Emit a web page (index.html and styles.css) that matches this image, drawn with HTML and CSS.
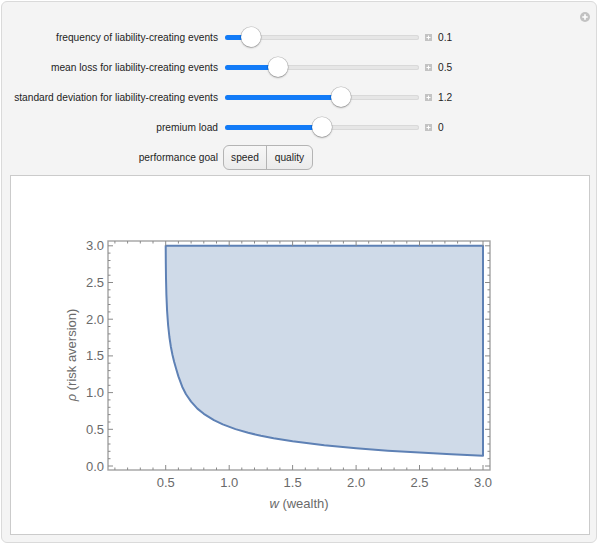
FILE: index.html
```html
<!DOCTYPE html>
<html>
<head>
<meta charset="utf-8">
<link rel="stylesheet" href="styles.css">
</head>
<body>
<div class="panel">
  <svg class="corner" width="10" height="10" viewBox="0 0 10 10"><circle cx="5" cy="5" r="5" fill="#c2c2c2"/><path d="M5 2.3v5.4M2.3 5h5.4" stroke="#fff" stroke-width="1.6"/></svg>
  <div class="controls">
    <div class="row">
      <div class="label">frequency of liability-creating events</div>
      <div class="slider"><div class="fill" style="width:26px"></div><div class="thumb" style="left:16px"></div></div>
      <svg class="plus" width="7" height="7" viewBox="0 0 7 7"><rect width="7" height="7" fill="#c3c3c3"/><path d="M3.5 1.5v4M1.5 3.5h4" stroke="#fff" stroke-width="1"/></svg>
      <span class="value">0.1</span>
    </div>
    <div class="row">
      <div class="label">mean loss for liability-creating events</div>
      <div class="slider"><div class="fill" style="width:53px"></div><div class="thumb" style="left:43px"></div></div>
      <svg class="plus" width="7" height="7" viewBox="0 0 7 7"><rect width="7" height="7" fill="#c3c3c3"/><path d="M3.5 1.5v4M1.5 3.5h4" stroke="#fff" stroke-width="1"/></svg>
      <span class="value">0.5</span>
    </div>
    <div class="row">
      <div class="label">standard deviation for liability-creating events</div>
      <div class="slider"><div class="fill" style="width:116px"></div><div class="thumb" style="left:106px"></div></div>
      <svg class="plus" width="7" height="7" viewBox="0 0 7 7"><rect width="7" height="7" fill="#c3c3c3"/><path d="M3.5 1.5v4M1.5 3.5h4" stroke="#fff" stroke-width="1"/></svg>
      <span class="value">1.2</span>
    </div>
    <div class="row">
      <div class="label">premium load</div>
      <div class="slider"><div class="fill" style="width:97px"></div><div class="thumb" style="left:87px"></div></div>
      <svg class="plus" width="7" height="7" viewBox="0 0 7 7"><rect width="7" height="7" fill="#c3c3c3"/><path d="M3.5 1.5v4M1.5 3.5h4" stroke="#fff" stroke-width="1"/></svg>
      <span class="value">0</span>
    </div>
    <div class="row">
      <div class="label label-btn">performance goal</div>
      <div class="seg">
        <button class="btn btn-speed">speed</button>
        <button class="btn btn-quality">quality</button>
      </div>
    </div>
  </div>
  <div class="plotbox">
    <svg class="plot" width="578" height="358" viewBox="11 176 578 358">
      <path d="M165.7,245.8 L483,245.8 L483,455.7 L451.2,454.3 L419.5,452.6 L387.8,450.7 L356.1,448.3 L324.3,445.3 L292.6,441.3 L273.6,438.3 L260.9,435.8 L248.2,432.8 L235.5,429.1 L222.8,424.4 L213.9,420.2 L203.8,413.8 L197.4,408.6 L191.1,401.6 L186,394.2 L182.2,386.7 L178.4,376.4 L176.2,369 L174.2,362 L172.5,355 L170.9,347 L169.4,337 L168.1,325 L167.1,311 L166.4,295 L166,278 L165.8,262 Z" fill="#cfdae8" stroke="#5e81b5" stroke-width="2" stroke-linejoin="round"/>
      <rect x="108" y="241" width="382" height="229" fill="none" stroke="#a3a3a3" stroke-width="1.4"/>
      <path class="ticks" d="
        M114.9,470v-2.5 M127.6,470v-2.5 M140.3,470v-2.5 M153,470v-2.5 M165.7,470v-5 M178.4,470v-2.5 M191.1,470v-2.5 M203.8,470v-2.5 M216.5,470v-2.5 M229.2,470v-5 M241.8,470v-2.5 M254.5,470v-2.5 M267.2,470v-2.5 M279.9,470v-2.5 M292.6,470v-5 M305.3,470v-2.5 M318,470v-2.5 M330.7,470v-2.5 M343.4,470v-2.5 M356.1,470v-5 M368.7,470v-2.5 M381.4,470v-2.5 M394.1,470v-2.5 M406.8,470v-2.5 M419.5,470v-5 M432.2,470v-2.5 M444.9,470v-2.5 M457.6,470v-2.5 M470.3,470v-2.5 M483,470v-5
        M114.9,241v2.5 M127.6,241v2.5 M140.3,241v2.5 M153,241v2.5 M165.7,241v5 M178.4,241v2.5 M191.1,241v2.5 M203.8,241v2.5 M216.5,241v2.5 M229.2,241v5 M241.8,241v2.5 M254.5,241v2.5 M267.2,241v2.5 M279.9,241v2.5 M292.6,241v5 M305.3,241v2.5 M318,241v2.5 M330.7,241v2.5 M343.4,241v2.5 M356.1,241v5 M368.7,241v2.5 M381.4,241v2.5 M394.1,241v2.5 M406.8,241v2.5 M419.5,241v5 M432.2,241v2.5 M444.9,241v2.5 M457.6,241v2.5 M470.3,241v2.5 M483,241v5
        M108,466h5 M108,458.7h2.5 M108,451.3h2.5 M108,444h2.5 M108,436.6h2.5 M108,429.3h5 M108,422h2.5 M108,414.6h2.5 M108,407.3h2.5 M108,399.9h2.5 M108,392.6h5 M108,385.3h2.5 M108,377.9h2.5 M108,370.6h2.5 M108,363.2h2.5 M108,355.9h5 M108,348.6h2.5 M108,341.2h2.5 M108,333.9h2.5 M108,326.5h2.5 M108,319.2h5 M108,311.9h2.5 M108,304.5h2.5 M108,297.2h2.5 M108,289.8h2.5 M108,282.5h5 M108,275.2h2.5 M108,267.8h2.5 M108,260.5h2.5 M108,253.1h2.5 M108,245.8h5
        M490,466h-5 M490,458.7h-2.5 M490,451.3h-2.5 M490,444h-2.5 M490,436.6h-2.5 M490,429.3h-5 M490,422h-2.5 M490,414.6h-2.5 M490,407.3h-2.5 M490,399.9h-2.5 M490,392.6h-5 M490,385.3h-2.5 M490,377.9h-2.5 M490,370.6h-2.5 M490,363.2h-2.5 M490,355.9h-5 M490,348.6h-2.5 M490,341.2h-2.5 M490,333.9h-2.5 M490,326.5h-2.5 M490,319.2h-5 M490,311.9h-2.5 M490,304.5h-2.5 M490,297.2h-2.5 M490,289.8h-2.5 M490,282.5h-5 M490,275.2h-2.5 M490,267.8h-2.5 M490,260.5h-2.5 M490,253.1h-2.5 M490,245.8h-5
      " fill="none" stroke="#8a8a8a" stroke-width="1"/>
      <g class="ylab" text-anchor="end">
        <text x="104" y="470.5">0.0</text>
        <text x="104" y="433.8">0.5</text>
        <text x="104" y="397.1">1.0</text>
        <text x="104" y="360.4">1.5</text>
        <text x="104" y="323.7">2.0</text>
        <text x="104" y="287">2.5</text>
        <text x="104" y="250.3">3.0</text>
      </g>
      <g class="xlab" text-anchor="middle">
        <text x="165.7" y="486.5">0.5</text>
        <text x="229.2" y="486.5">1.0</text>
        <text x="292.6" y="486.5">1.5</text>
        <text x="356.1" y="486.5">2.0</text>
        <text x="419.5" y="486.5">2.5</text>
        <text x="483" y="486.5">3.0</text>
      </g>
      <text class="axis-title" x="299" y="507.5" text-anchor="middle"><tspan class="it">w</tspan> (wealth)</text>
      <text class="axis-title" transform="translate(75.5,355) rotate(-90)" text-anchor="middle"><tspan class="it">ρ</tspan> (risk aversion)</text>
    </svg>
  </div>
</div>
</body>
</html>
```

FILE: styles.css
```css
html, body {
  margin: 0;
  padding: 0;
  background: #ffffff;
}
body {
  padding: 1px 0 0 1px;
  font-family: "Liberation Sans", Arial, sans-serif;
  font-size: 10.2px;
  color: #222;
}
.panel {
  position: relative;
  box-sizing: border-box;
  width: 596px;
  height: 542px;
  border: 1px solid #dadada;
  border-radius: 6px;
  background: #f4f4f4;
}
.corner {
  position: absolute;
  right: 6px;
  top: 10px;
  display: block;
}
.controls {
  padding-top: 20px;
}
.row {
  display: flex;
  align-items: center;
  height: 30px;
}
.label {
  width: 216px;
  margin-right: 7px;
  text-align: right;
  white-space: nowrap;
  color: #1e1e1e;
}
.label-btn {
  margin-right: 5px;
}
.slider {
  position: relative;
  width: 194px;
  height: 5px;
  border-radius: 3px;
  background: #e6e6e6;
  box-shadow: inset 0 0 0 1px #d9d9d9;
}
.fill {
  height: 5px;
  border-radius: 3px 0 0 3px;
  background: #127bf7;
}
.thumb {
  position: absolute;
  top: -7.5px;
  width: 20px;
  height: 20px;
  box-sizing: border-box;
  border-radius: 50%;
  background: #ffffff;
  box-shadow: 0 0 0 0.5px rgba(0, 0, 0, 0.22), 0 1px 2px rgba(0, 0, 0, 0.28);
}
.plus {
  display: block;
  margin-left: 6px;
}
.value {
  margin-left: 6px;
  color: #1e1e1e;
}
.seg {
  display: flex;
  height: 25px;
  box-sizing: border-box;
  border: 1px solid #b4b4b4;
  border-radius: 6px;
  background: linear-gradient(#f7f7f7, #ebebeb);
  overflow: hidden;
}
.btn {
  margin: 0;
  padding: 0;
  border: 0;
  background: transparent;
  font-family: "Liberation Sans", Arial, sans-serif;
  font-size: 10.2px;
  color: #1e1e1e;
  height: 23px;
}
.btn-speed {
  width: 43px;
  border-right: 1px solid #b4b4b4;
}
.btn-quality {
  width: 45px;
}
.plotbox {
  box-sizing: border-box;
  width: 580px;
  height: 360px;
  margin: 3px 0 0 8px;
  border: 1px solid #cbcbcb;
  background: #ffffff;
}
.plot {
  display: block;
}
.ylab text, .xlab text {
  font-family: "Liberation Sans", Arial, sans-serif;
  font-size: 13px;
  fill: #6a6a6a;
}
.axis-title {
  font-family: "Liberation Sans", Arial, sans-serif;
  font-size: 13px;
  fill: #6a6a6a;
}
.it {
  font-style: italic;
}
```
